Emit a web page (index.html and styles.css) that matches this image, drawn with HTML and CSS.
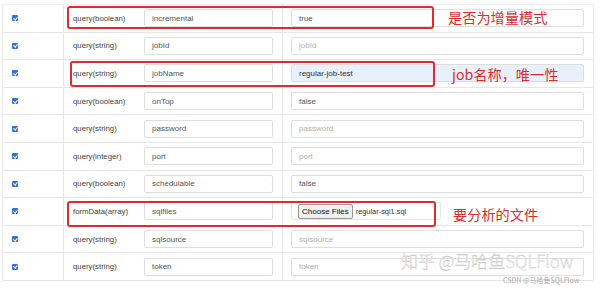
FILE: index.html
```html
<!DOCTYPE html>
<html lang="zh-CN">
<head>
  <meta charset="UTF-8">
  <title>Parameters</title>
  <link rel="stylesheet" href="styles.css">
</head>
<body>
  <div class="sheet">
    <table class="params">
      <tr>
        <td class="check"><span class="box"></span></td>
        <td class="type"><span class="type-name">query(boolean)</span><span class="field">incremental</span></td>
        <td class="value"><span class="field">true</span></td>
      </tr>
      <tr>
        <td class="check"><span class="box"></span></td>
        <td class="type"><span class="type-name">query(string)</span><span class="field">jobId</span></td>
        <td class="value"><span class="field empty">jobId</span></td>
      </tr>
      <tr>
        <td class="check"><span class="box"></span></td>
        <td class="type"><span class="type-name">query(string)</span><span class="field">jobName</span></td>
        <td class="value"><span class="field filled">regular-job-test</span></td>
      </tr>
      <tr>
        <td class="check"><span class="box"></span></td>
        <td class="type"><span class="type-name">query(boolean)</span><span class="field">onTop</span></td>
        <td class="value"><span class="field">false</span></td>
      </tr>
      <tr>
        <td class="check"><span class="box"></span></td>
        <td class="type"><span class="type-name">query(string)</span><span class="field">password</span></td>
        <td class="value"><span class="field empty">password</span></td>
      </tr>
      <tr>
        <td class="check"><span class="box"></span></td>
        <td class="type"><span class="type-name">query(integer)</span><span class="field">port</span></td>
        <td class="value"><span class="field empty">port</span></td>
      </tr>
      <tr>
        <td class="check"><span class="box"></span></td>
        <td class="type"><span class="type-name">query(boolean)</span><span class="field">schedulable</span></td>
        <td class="value"><span class="field">false</span></td>
      </tr>
      <tr>
        <td class="check"><span class="box"></span></td>
        <td class="type"><span class="type-name">formData(array)</span><span class="field">sqlfiles</span></td>
        <td class="value"><span class="file"><span class="file-btn">Choose Files</span>regular-sql1.sql</span></td>
      </tr>
      <tr>
        <td class="check"><span class="box"></span></td>
        <td class="type"><span class="type-name">query(string)</span><span class="field">sqlsource</span></td>
        <td class="value"><span class="field empty">sqlsource</span></td>
      </tr>
      <tr>
        <td class="check"><span class="box"></span></td>
        <td class="type"><span class="type-name">query(string)</span><span class="field">token</span></td>
        <td class="value"><span class="field empty">token</span></td>
      </tr>
    </table>

    <!-- annotations -->
    <div class="mark mark-1"></div>
    <div class="mark mark-2"></div>
    <div class="mark mark-3"></div>
    <div class="note note-1">是否为增量模式</div>
    <div class="note note-2">job名称，唯一性</div>
    <div class="note note-3">要分析的文件</div>

    <div class="wm">知乎 @马哈鱼SQLFlow</div>
    <div class="wm-small">CSDN @马哈鱼SQLFlow</div>
  </div>
</body>
</html>
```

FILE: styles.css
```css
body {
  margin: 0;
  background: #fff;
  font-family: "Liberation Sans", Arial, sans-serif;
}

.sheet {
  position: relative;
  width: 600px;
  height: 289px;
  overflow: hidden;
}

.params {
  margin: 4px 0 0 2px;
  width: 591px;
  border-collapse: collapse;
  table-layout: fixed;
  font-size: 7.8px;
  color: #444;
}

.params tr {
  height: 27.6px;
  border-bottom: 1px solid #e6e6e6;
}

.params tr:first-child {
  border-top: 1px solid #f0f0f0;
}

.params td {
  box-sizing: border-box;
  padding: 0;
  vertical-align: middle;
  white-space: nowrap;
}

.params td.check {
  width: 61px;
  padding-left: 9px;
  border-left: 1px solid #eee;
  border-right: 1px solid #e6e6e6;
}

.box {
  display: block;
  width: 6px;
  height: 6px;
  background: #2f73d9;
  border-radius: 1px;
  position: relative;
}

.box::after {
  content: "";
  position: absolute;
  left: 1.5px;
  top: 0.5px;
  width: 1.5px;
  height: 3px;
  border: solid #fff;
  border-width: 0 1px 1px 0;
  transform: rotate(40deg);
}

.params td.type {
  width: 219px;
  padding-left: 9px;
  border-right: 1px solid #e6e6e6;
}

.type-name,
.type .field {
  display: inline-flex;
  vertical-align: middle;
}

.type-name {
  width: 71px;
}

.field {
  display: flex;
  align-items: center;
  box-sizing: border-box;
  height: 18px;
  padding-left: 7px;
  border: 1px solid #dedede;
  border-radius: 2px;
  color: #555;
  font-size: 8px;
}

.type .field {
  width: 129px;
  align-items: center;
}

.params td.value {
  width: 311px;
  padding-left: 8px;
  border-right: 1px solid #eee;
}

.value .field {
  width: 293px;
}

.field.empty {
  color: #b0b0b0;
}

.field.filled {
  background: #e8f0fe;
  color: #333;
}

.file {
  display: flex;
  align-items: center;
  box-sizing: border-box;
  height: 18px;
  width: 150px;
  padding-left: 6px;
  border: 1px solid #e8e8e8;
  border-radius: 2px;
  color: #333;
  font-size: 7.4px;
}

.file-btn {
  display: inline-block;
  margin-right: 3px;
  padding: 2px 3px;
  background: #efefef;
  border: 1px solid #999;
  border-radius: 2px;
  color: #111;
  font-size: 8px;
}

.mark {
  position: absolute;
  border: 2px solid #e02b2b;
  border-radius: 3px;
  box-sizing: border-box;
}

.mark-1 { left: 67px; top: 6px; width: 367px; height: 23px; }
.mark-2 { left: 70px; top: 61px; width: 365px; height: 26px; }
.mark-3 { left: 67px; top: 201px; width: 369px; height: 26px; }

.note {
  position: absolute;
  font-family: "Noto Sans CJK SC", "Liberation Sans", sans-serif;
  font-size: 14.2px;
  line-height: 1;
  color: #e02b2b;
}

.note-1 { left: 448px; top: 10px; }
.note-2 { left: 452px; top: 67px; }
.note-3 { left: 453px; top: 207px; }

.wm {
  position: absolute;
  left: 401px;
  top: 252px;
  font-family: "Noto Sans CJK SC", "Liberation Sans", sans-serif;
  font-size: 17px;
  font-weight: 300;
  line-height: 1;
  color: #fff;
  -webkit-text-stroke: 0.4px #c4c4c4;
}

.wm-small {
  position: absolute;
  left: 503px;
  top: 277px;
  font-family: "Noto Sans CJK SC", "Liberation Sans", sans-serif;
  font-size: 7px;
  line-height: 1;
  color: #a8a8a8;
}
```
